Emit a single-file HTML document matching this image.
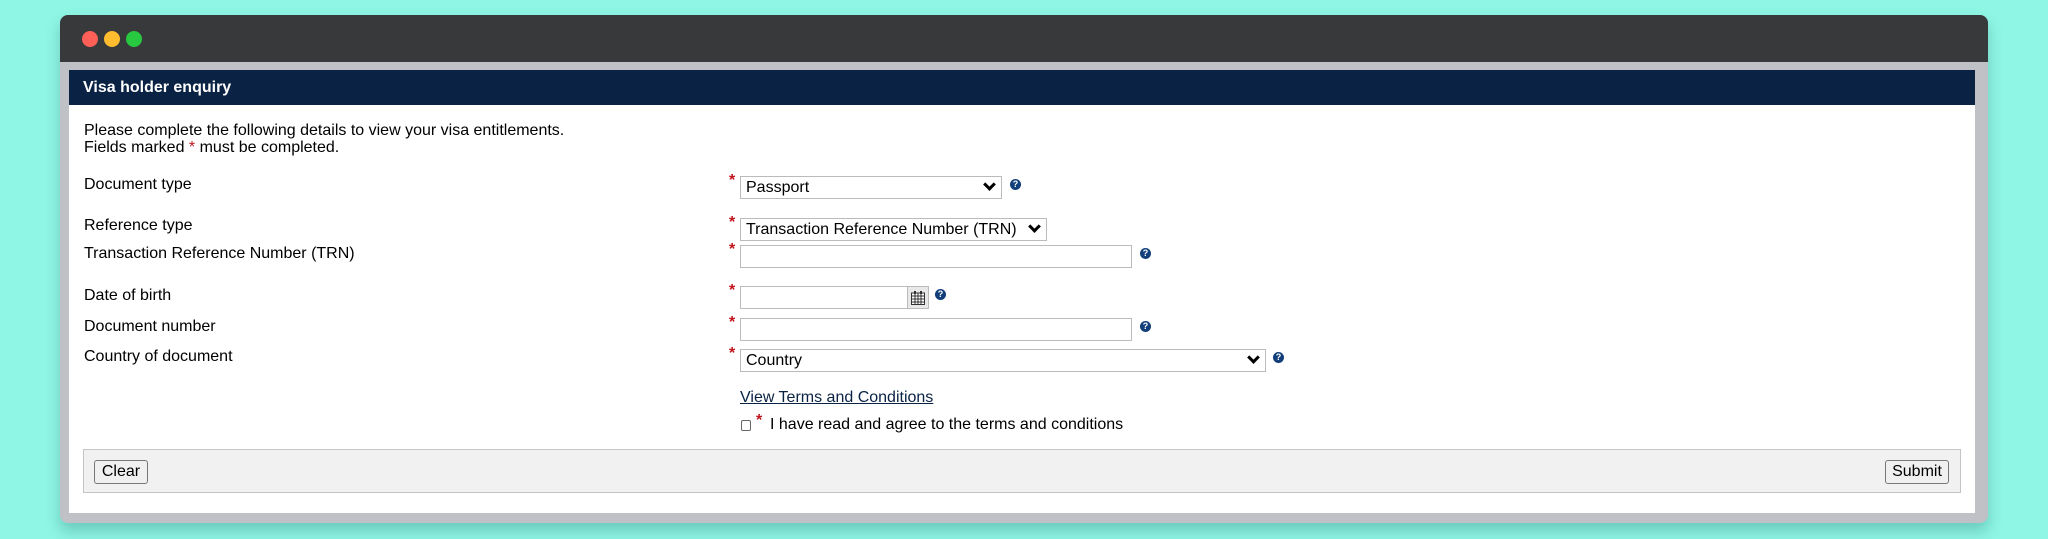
<!DOCTYPE html>
<html><head><style>
*{box-sizing:border-box;margin:0;padding:0}
body{width:2048px;height:539px;background:#8ff5e4;font-family:"Liberation Sans",Arial,sans-serif;position:relative;overflow:hidden;color:#000}
.win{position:absolute;left:60px;top:15px;width:1928px;height:508px;background:#c0c1c7;border-radius:8px;box-shadow:0 8px 14px rgba(0,80,70,.25);overflow:hidden}
.tb{position:absolute;left:0;top:0;right:0;height:47px;background:#38393b}
.dot{position:absolute;top:16px;width:16px;height:16px;border-radius:50%}
.content{position:absolute;left:9px;top:55px;width:1906px;height:443px;background:#fff}
.hdr{height:35px;background:#0a2244;color:#fff;font-weight:bold;font-size:16px;line-height:35px;padding-left:14px}
.a{position:absolute;font-size:16px;white-space:nowrap}
.ab{position:absolute}
.star{position:absolute;color:#c0141c;font-size:16px;font-weight:bold}
.in{position:absolute;border:1px solid #bbb;background:#fff;height:23px;font-size:16px;line-height:21px;padding-left:5px}
.chev{position:absolute;right:7px;top:3px;width:9px;height:9px;border-right:3px solid #000;border-bottom:3px solid #000;transform:rotate(45deg)}
.q{position:absolute;width:11px;height:11px;border-radius:50%;background:#123e7a;color:#fff;font-size:9px;font-weight:bold;text-align:center;line-height:11px}
.btn{position:absolute;border:1px solid #777;border-radius:3px;background:#f0f0f0;font-size:16px;line-height:22px;text-align:center;height:24px}
</style></head><body>
<div class="win">
<div class="tb"><div class="dot" style="left:22px;background:#fe5f57"></div><div class="dot" style="left:44px;background:#febc2e"></div><div class="dot" style="left:66px;background:#28c840"></div></div>
<div class="content"><div class="hdr">Visa holder enquiry</div></div>
</div>
<div class="a" style="left:84px;top:122px">Please complete the following details to view your visa entitlements.</div>
<div class="a" style="left:84px;top:139px">Fields marked <span style="color:#c0141c">*</span> must be completed.</div>

<div class="a" style="left:84px;top:176px">Document type</div>
<div class="a" style="left:84px;top:217px">Reference type</div>
<div class="a" style="left:84px;top:245px">Transaction Reference Number (TRN)</div>
<div class="a" style="left:84px;top:287px">Date of birth</div>
<div class="a" style="left:84px;top:318px">Document number</div>
<div class="a" style="left:84px;top:348px">Country of document</div>

<div class="star" style="left:729px;top:172px">*</div>
<div class="in" style="left:740px;top:176px;width:262px">Passport<div class="chev"></div></div>
<div class="q" style="left:1010px;top:179px">?</div>

<div class="star" style="left:729px;top:214px">*</div>
<div class="in" style="left:740px;top:218px;width:307px">Transaction Reference Number (TRN)<div class="chev"></div></div>

<div class="star" style="left:729px;top:241px">*</div>
<div class="in" style="left:740px;top:245px;width:392px"></div>
<div class="q" style="left:1140px;top:248px">?</div>

<div class="star" style="left:729px;top:282px">*</div>
<div class="in" style="left:740px;top:286px;width:168px"></div>
<div class="in" style="left:907px;top:286px;width:22px;background:#e8e8e8;padding:3px 3px"><svg width="14" height="14" viewBox="0 0 14 14"><rect x="0.5" y="2" width="13" height="11.5" fill="#fff" stroke="#333"/><path d="M0.5 5h13M0.5 8h13M0.5 11h13M4 2v11.5M7 2v11.5M10 2v11.5" stroke="#333" stroke-width="1"/><rect x="3" y="0" width="2" height="3" fill="#333"/><rect x="9" y="0" width="2" height="3" fill="#333"/></svg></div>
<div class="q" style="left:935px;top:289px">?</div>

<div class="star" style="left:729px;top:314px">*</div>
<div class="in" style="left:740px;top:318px;width:392px"></div>
<div class="q" style="left:1140px;top:321px">?</div>

<div class="star" style="left:729px;top:345px">*</div>
<div class="in" style="left:740px;top:349px;width:526px">Country<div class="chev"></div></div>
<div class="q" style="left:1273px;top:352px">?</div>

<div class="a" style="left:740px;top:389px;color:#0a2244;text-decoration:underline">View Terms and Conditions</div>
<div class="ab" style="left:741px;top:420px;width:10px;height:11px;border:1px solid #666;border-radius:2px"></div>
<div class="star" style="left:756px;top:412px">*</div>
<div class="a" style="left:770px;top:416px">I have read and agree to the terms and conditions</div>

<div class="ab" style="left:83px;top:449px;width:1878px;height:44px;background:#f1f1f1;border:1px solid #c5c5c9"></div>
<div class="btn" style="left:94px;top:460px;width:54px">Clear</div>
<div class="btn" style="left:1885px;top:460px;width:64px">Submit</div>
</body></html>
